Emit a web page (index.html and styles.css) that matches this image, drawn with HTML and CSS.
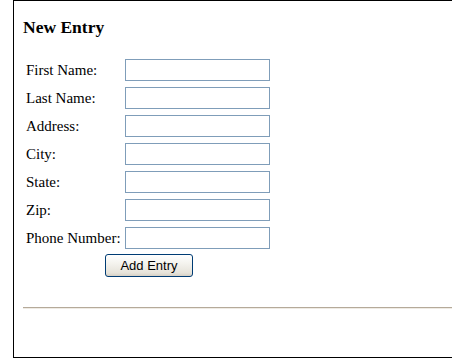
FILE: index.html
```html
<!DOCTYPE html>
<html>
<head>
<meta charset="utf-8">
<title>New Entry</title>
<link rel="stylesheet" href="styles.css">
</head>
<body>
<div class="box">
  <h3 class="title">New Entry</h3>
  <form class="form">
    <label class="lbl" for="f1">First Name:</label><input class="field" id="f1" type="text">
    <label class="lbl" for="f2">Last Name:</label><input class="field" id="f2" type="text">
    <label class="lbl" for="f3">Address:</label><input class="field" id="f3" type="text">
    <label class="lbl" for="f4">City:</label><input class="field" id="f4" type="text">
    <label class="lbl" for="f5">State:</label><input class="field" id="f5" type="text">
    <label class="lbl" for="f6">Zip:</label><input class="field" id="f6" type="text">
    <label class="lbl" for="f7">Phone Number:</label><input class="field" id="f7" type="text">
    <div class="actions"><button class="btn" type="button">Add Entry</button></div>
  </form>
  <div class="rule"></div>
</div>
</body>
</html>
```

FILE: styles.css
```css
html, body {
  margin: 0;
  padding: 0;
  overflow: hidden;
  background: #fff;
}
body {
  font-family: "Liberation Serif", "Times New Roman", serif;
  font-size: 15px;
  color: #000;
}
.box {
  box-sizing: border-box;
  margin-left: 13px;
  width: 439px;
  height: 358px;
  border: 1px solid #000;
  border-right: none;
  padding: 16px 0 0 9px;
}
.title {
  margin: 0;
  font-size: 17.5px;
  font-weight: bold;
  line-height: 20px;
}
.form {
  margin: 22px 0 0 0;
  display: grid;
  grid-template-columns: 102px 145px;
  grid-auto-rows: 22px;
  row-gap: 6px;
  width: 247px;
}
.lbl {
  padding-left: 3px;
  display: flex;
  align-items: center;
  white-space: nowrap;
  line-height: 17px;
}
.field {
  box-sizing: border-box;
  width: 145px;
  height: 22px;
  margin: 0;
  border: 1px solid #7f9db9;
  background: #fff;
  padding: 2px 3px;
  font: 13px "Liberation Sans", Arial, sans-serif;
}
.actions {
  grid-column: 1 / 3;
  height: 23px;
  padding-left: 82px;
  margin-top: -1px;
}
.btn {
  box-sizing: border-box;
  width: 88px;
  height: 23px;
  margin: 0;
  padding: 0;
  border: 1px solid #003c74;
  border-radius: 3px;
  background: linear-gradient(#ffffff 0%, #f4f3ee 40%, #e6e3da 85%, #d6d0c5 100%);
  font: 13px "Liberation Sans", Arial, sans-serif;
  color: #000;
}
.rule {
  margin-top: 30px;
  height: 0;
  border-top: 1px solid #b5aa9a;
  border-bottom: 1px solid #efebe4;
}
```
